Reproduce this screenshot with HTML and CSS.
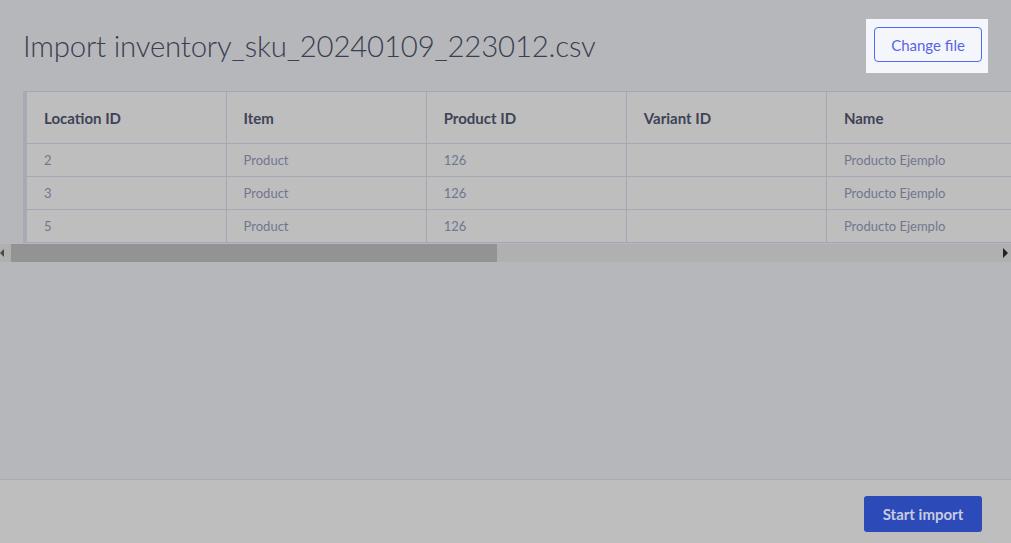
FILE: index.html
```html
<!DOCTYPE html>
<html>
<head>
<meta charset="utf-8">
<link rel="stylesheet" href="styles.css">
</head>
<body>
<div class="page">
  <header class="header">
    <h1 class="title">Import inventory_sku_20240109_223012.csv</h1>
    <div class="spotlight">
      <button class="btn-outline">Change file</button>
    </div>
  </header>
  <div class="table-wrap">
    <table class="grid">
      <thead>
        <tr><th>Location ID</th><th>Item</th><th>Product ID</th><th>Variant ID</th><th>Name</th></tr>
      </thead>
      <tbody>
        <tr><td>2</td><td>Product</td><td>126</td><td></td><td>Producto Ejemplo</td></tr>
        <tr><td>3</td><td>Product</td><td>126</td><td></td><td>Producto Ejemplo</td></tr>
        <tr><td>5</td><td>Product</td><td>126</td><td></td><td>Producto Ejemplo</td></tr>
      </tbody>
    </table>
  </div>
  <div class="scrollbar">
    <span class="arrow arrow-left"></span>
    <div class="track"><div class="thumb"></div></div>
    <span class="arrow arrow-right"></span>
  </div>
  <div class="spacer"></div>
  <footer class="footer">
    <button class="btn-primary">Start import</button>
  </footer>
</div>
</body>
</html>
```
FILE: styles.css
```css
* { box-sizing: border-box; }
html, body { margin: 0; padding: 0; }
body {
  width: 1011px;
  height: 543px;
  overflow: hidden;
  background: #b6b7bb;
  font-family: "Source Sans Pro", Lato, "Noto Sans", sans-serif;
}
.page {
  display: flex;
  flex-direction: column;
  height: 543px;
}
.header {
  display: flex;
  align-items: flex-start;
  justify-content: space-between;
  height: 91px;
  padding: 0 23px;
}
.title {
  margin: 28px 0 0 0;
  font-weight: 300;
  font-size: 29.4px;
  line-height: 36px;
  color: #3a3f4f;
  letter-spacing: -0.2px;
}
.spotlight {
  background: #f5f6fb;
  padding: 8px 6px 11px 8px;
  margin-top: 19px;
}
.btn-outline {
  display: block;
  width: 108px;
  height: 35px;
  border: 1px solid #4a6cf7;
  border-radius: 4px;
  background: #f5f6fb;
  color: #5566e4;
  font-family: inherit;
  font-size: 15px;
  padding: 0;
}
.table-wrap {
  margin-left: 23px;
  overflow: hidden;
  border-left: 4px solid #a8a9b2;
  height: 152px;
}
.grid {
  border-collapse: collapse;
  table-layout: fixed;
  width: 1000px;
  background: #bebebe;
}
.grid th, .grid td {
  width: 200px;
  text-align: left;
  padding: 0 0 0 17px;
  border: 1px solid #a6a7b4;
  border-left: none;
}
.grid th:first-child, .grid td:first-child { width: 199px; }
.grid th + th, .grid td + td { border-left: 1px solid #a6a7b4; }
.grid th {
  height: 52px;
  font-weight: 700;
  font-size: 15px;
  color: #3f4356;
}
.grid td {
  height: 33px;
  font-size: 13px;
  color: #717690;
}
.scrollbar {
  display: flex;
  align-items: center;
  height: 18px;
  margin-top: 1px;
  background: #b0b0b0;
}
.arrow { width: 11px; height: 18px; display: flex; align-items: center; }
.arrow-left::before {
  content: "";
  border-top: 4px solid transparent;
  border-bottom: 4px solid transparent;
  border-right: 4px solid #4a4a4a;
}
.arrow-right { justify-content: flex-end; padding-right: 3px; }
.arrow-right::before {
  content: "";
  border-top: 5px solid transparent;
  border-bottom: 5px solid transparent;
  border-left: 5px solid #222;
}
.track { flex: 1; height: 18px; }
.thumb { width: 486px; height: 18px; background: #939393; }
.spacer { flex: 1; }
.footer {
  height: 64px;
  border-top: 1px solid #a9aab2;
  background: #bebebe;
  display: flex;
  justify-content: flex-end;
  align-items: flex-start;
  padding: 16px 29px 0 0;
}
.btn-primary {
  width: 118px;
  height: 36px;
  border: none;
  border-radius: 3px;
  background: #2c4ab8;
  color: #c7cce0;
  font-family: inherit;
  font-weight: 700;
  font-size: 15px;
  padding: 0;
}
```
